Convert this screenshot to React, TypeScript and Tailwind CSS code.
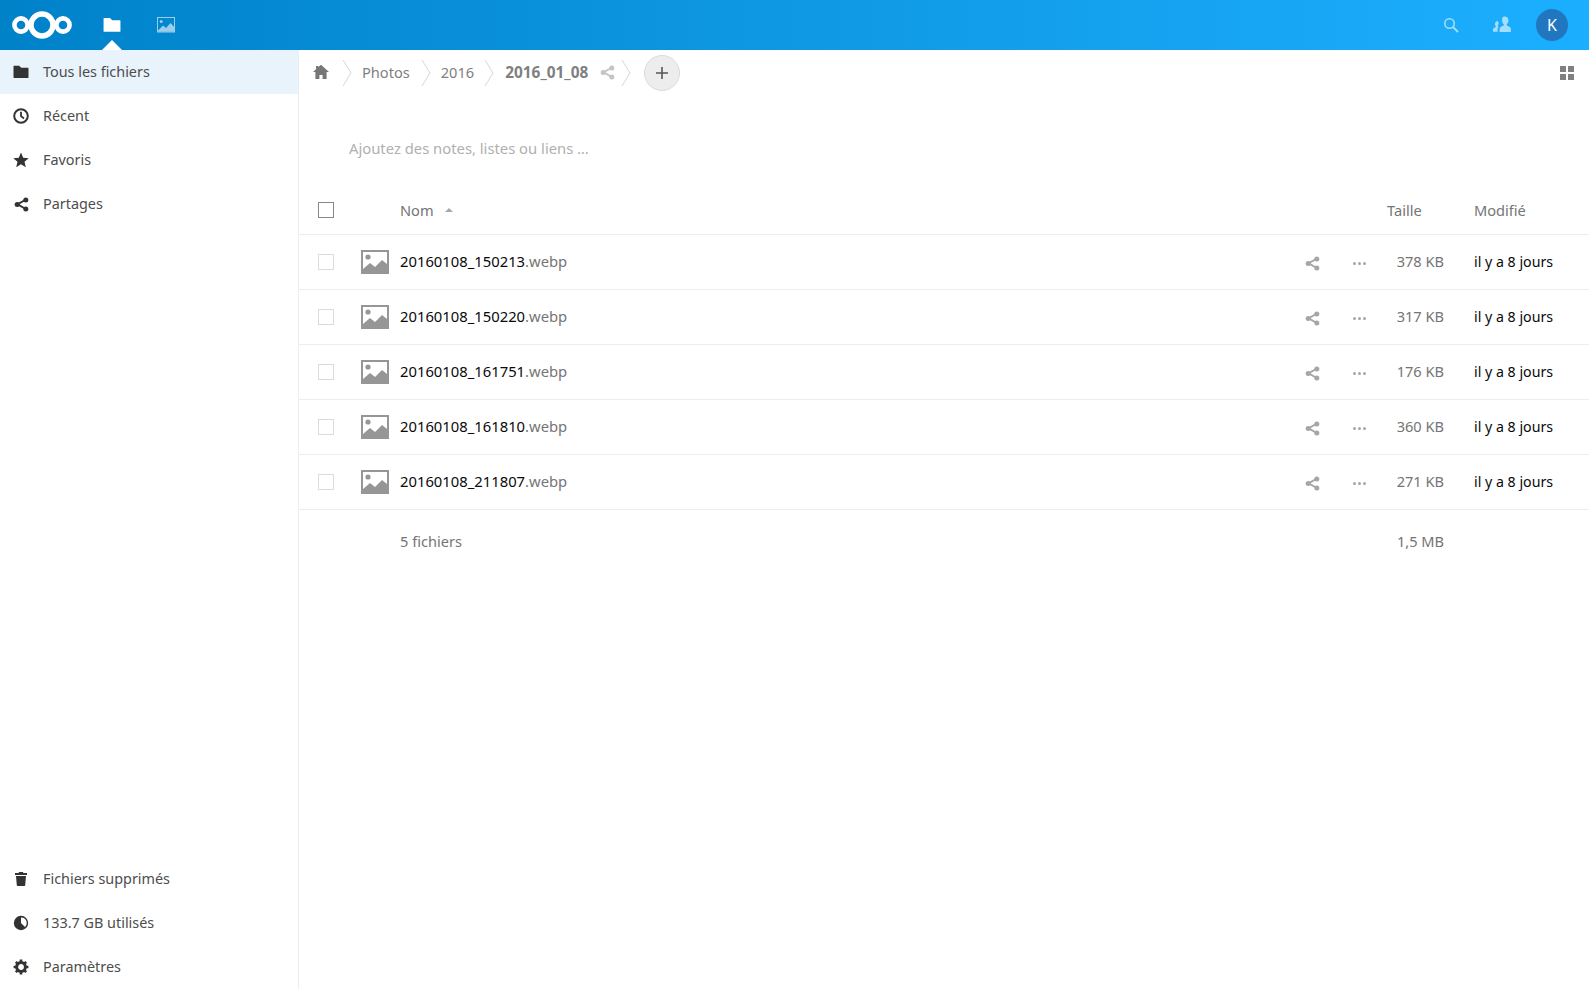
const font = "font-['Noto_Sans',sans-serif]";

function Logo() {
  return (
    <svg width="62" height="30" viewBox="0 0 62 30" fill="none" stroke="#fff">
      <circle cx="10" cy="15" r="6.6" strokeWidth="4.6" />
      <circle cx="31" cy="15" r="11" strokeWidth="5.4" />
      <circle cx="52" cy="15" r="6.6" strokeWidth="4.6" />
    </svg>
  );
}

function FolderIcon({ color, size = 16 }: { color: string; size?: number }) {
  return (
    <svg width={size} height={size} viewBox="0 0 16 16" fill={color}>
      <path d="M1 1.8h5.2l2 2H15c.3 0 .5.2.5.5v9.2c0 .3-.2.5-.5.5H1c-.3 0-.5-.2-.5-.5V2.3c0-.3.2-.5.5-.5z" />
    </svg>
  );
}

function PhotoNavIcon() {
  return (
    <svg width="18" height="16" viewBox="0 0 18 16" opacity="0.6">
      <path fill="#fff" fillRule="evenodd" d="M0 0h18v15.5H0zM1 1v13.5h16V1z" />
      <circle cx="4.2" cy="4.4" r="1.5" fill="#fff" />
      <path fill="#fff" d="M1 13.5l5-5 3 2.6 4.5-5 3.5 3.6v5H1z" />
    </svg>
  );
}

function ShareIcon({ color, size = 16 }: { color: string; size?: number }) {
  return (
    <svg width={size} height={size} viewBox="0 0 16 16" fill={color}>
      <circle cx="12.6" cy="3.2" r="2.7" />
      <circle cx="12.6" cy="12.8" r="2.7" />
      <circle cx="3.4" cy="8" r="2.7" />
      <path d="M3 7l9-5 1 1.8-9 5z M4 6.7l9 5.2-1 1.8-9-5.2z" />
    </svg>
  );
}

function ClockIcon() {
  return (
    <svg width="16" height="16" viewBox="0 0 16 16" fill="none" stroke="#333">
      <circle cx="8" cy="8" r="6.8" strokeWidth="2" />
      <path d="M8 3.8V8l3 2.6" strokeWidth="1.8" />
    </svg>
  );
}

function StarIcon() {
  return (
    <svg width="16" height="16" viewBox="0 0 16 16" fill="#333">
      <path d="M8 .6l2.2 5.1 5.5.5-4.2 3.6 1.3 5.4L8 12.3l-4.8 2.9 1.3-5.4L.3 6.2l5.5-.5z" />
    </svg>
  );
}

function TrashIcon() {
  return (
    <svg width="16" height="16" viewBox="0 0 16 16" fill="#333">
      <path d="M6.2 1h3.6l.7 1H14v2H2V2h3.5zM3 5h10l-.8 9.2c0 .5-.5.8-1 .8H4.8c-.5 0-1-.3-1-.8z" />
    </svg>
  );
}

function QuotaIcon() {
  return (
    <svg width="16" height="16" viewBox="0 0 16 16">
      <circle cx="8" cy="8" r="7.2" fill="#333" />
      <path fill="#fff" d="M8 8V2.4A5.6 5.6 0 0 1 12 12z" />
    </svg>
  );
}

function GearIcon() {
  return (
    <svg width="16" height="16" viewBox="0 0 16 16" fill="none" stroke="#333">
      <circle cx="8" cy="8" r="4.4" strokeWidth="3" />
      <path
        strokeWidth="2.6"
        d="M8 .6v2.6M8 12.8v2.6M.6 8h2.6M12.8 8h2.6M2.8 2.8l1.8 1.8M11.4 11.4l1.8 1.8M2.8 13.2l1.8-1.8M11.4 4.6l1.8-1.8"
      />
    </svg>
  );
}

function HomeIcon() {
  return (
    <svg width="16" height="16" viewBox="0 0 16 16" fill="#777">
      <path d="M8 .8L16 8h-2.4v7H9.6v-4H6.4v4H2.4V8H0L3 5.3V2h2.4v1.1z" />
    </svg>
  );
}

function Crumb() {
  return (
    <svg width="10" height="28" viewBox="0 0 10 28" fill="none" stroke="#d8d8d8" className="shrink-0">
      <path d="M1 1l8 13-8 13" />
    </svg>
  );
}

function GridIcon() {
  return (
    <svg width="14" height="14" viewBox="0 0 14 14" fill="#808080">
      <path d="M0 0h6v6H0zM8 0h6v6H8zM0 8h6v6H0zM8 8h6v6H8z" />
    </svg>
  );
}

function FileIcon() {
  return (
    <svg width="28" height="24" viewBox="0 0 28 24">
      <path fill="#969696" fillRule="evenodd" d="M0 0h28v24H0zM2 2v20h24V2z" />
      <circle cx="7" cy="7" r="2.6" fill="#969696" />
      <path fill="#969696" d="M2 19l7-6 5 4 7-7 5 4v10H2z" />
    </svg>
  );
}

function SearchIcon() {
  return (
    <svg width="16" height="16" viewBox="0 0 16 16" fill="none" stroke="#fff" opacity="0.6">
      <circle cx="6.5" cy="6.5" r="4.7" strokeWidth="1.6" />
      <path d="M10 10l5 5" strokeWidth="2" />
    </svg>
  );
}

function ContactsIcon() {
  return (
    <svg width="18" height="18" viewBox="0 0 18 18" fill="#fff" opacity="0.6">
      <path d="M11.6.4c2.4 0 3.8 1.6 3.8 3.9 0 1.7-.7 3.1-1.5 4-.4.6-.3 1.1.3 1.4 1.5.7 3.3 1.2 3.6 2.6.1.8.1 2.2.1 3.6H6.6c0-1.4 0-2.8.1-3.6.3-1.4 2.1-1.9 3.6-2.6.6-.3.7-.8.3-1.4-.8-.9-1.5-2.3-1.5-4C9.100 2 9.200.4 11.600.4z" />
      <path d="M3.6 4.800c1.300 0 2 1 2 2.400 0 1-.4 1.800-.8 2.300-.2.4-.1.7.2.9l.6.3c-.6.7-1 1.700-1 3.100v2H0c0-1.600 0-2.600.1-3 .3-.8 1.500-1.200 2.500-1.600.3-.2.4-.5.2-.8-.4-.5-.8-1.300-.8-2.200 0-1.400.4-2.400 1.600-2.400z" />
    </svg>
  );
}

function NavItem({ icon, label, active }: { icon: React.ReactNode; label: string; active?: boolean }) {
  return (
    <div className={`flex h-11 items-center text-[14.4px] text-[#4d4d4d] ${active ? "bg-[#e8f3fb]" : ""}`}>
      <div className="flex w-[42px] shrink-0 justify-center">{icon}</div>
      <span className="ml-px">{label}</span>
    </div>
  );
}

const files = [
  { name: "20160108_150213", size: "378 KB" },
  { name: "20160108_150220", size: "317 KB" },
  { name: "20160108_161751", size: "176 KB" },
  { name: "20160108_161810", size: "360 KB" },
  { name: "20160108_211807", size: "271 KB" },
];

function FileRow({ name, size }: { name: string; size: string }) {
  return (
    <div className="flex h-[55px] items-center border-b border-[#ededed]">
      <div className="ml-[19px] h-4 w-4 shrink-0 border border-[#dbdbdb]" />
      <div className="ml-[27px] shrink-0">
        <FileIcon />
      </div>
      <div className="ml-[11px] flex-1 -translate-y-px text-[14.8px] text-[#0a0a0a]">
        {name}
        <span className="text-[#757575]">.webp</span>
      </div>
      <div className="mr-[33px] translate-y-px">
        <ShareIcon color="#a6a6a6" size={15} />
      </div>
      <div className="mr-[18px] flex translate-y-px gap-[2px]">
        <span className="h-[3px] w-[3px] rounded-full bg-[#a6a6a6]" />
        <span className="h-[3px] w-[3px] rounded-full bg-[#a6a6a6]" />
        <span className="h-[3px] w-[3px] rounded-full bg-[#a6a6a6]" />
      </div>
      <div className="w-[60px] text-right text-[14.6px] text-[#757575]">{size}</div>
      <div className="w-[145px] whitespace-nowrap pl-[30px] text-[14.2px] text-[#0a0a0a]">il y a 8 jours</div>
    </div>
  );
}

export default function App() {
  return (
    <div className={`flex h-[989px] flex-col overflow-hidden bg-white text-[14.6px] ${font}`}>
      <header className="flex h-[50px] shrink-0 items-center bg-gradient-to-r from-[#0082c9] to-[#1cafff]">
        <div className="ml-[11px]">
          <Logo />
        </div>
        <div className="relative ml-[30px] flex h-full w-[18px] items-center justify-center">
          <FolderIcon color="#fff" size={20} />
          <div className="absolute bottom-0 left-1/2 h-0 w-0 -translate-x-1/2 border-x-[10px] border-b-[10px] border-x-transparent border-b-white" />
        </div>
        <div className="ml-[36px]">
          <PhotoNavIcon />
        </div>
        <div className="ml-auto">
          <SearchIcon />
        </div>
        <div className="ml-[34px]">
          <ContactsIcon />
        </div>
        <div className="ml-[25px] mr-[21px] flex h-8 w-8 items-center justify-center rounded-full bg-[#2077c0] text-[16px] text-white">
          K
        </div>
      </header>

      <div className="flex min-h-0 flex-1">
        <aside className="flex w-[299px] shrink-0 flex-col justify-between border-r border-[#ededed]">
          <nav>
            <NavItem active icon={<FolderIcon color="#333" />} label="Tous les fichiers" />
            <NavItem icon={<ClockIcon />} label="Récent" />
            <NavItem icon={<StarIcon />} label="Favoris" />
            <NavItem icon={<ShareIcon color="#333" size={15} />} label="Partages" />
          </nav>
          <nav>
            <NavItem icon={<TrashIcon />} label="Fichiers supprimés" />
            <NavItem icon={<QuotaIcon />} label="133.7 GB utilisés" />
            <NavItem icon={<GearIcon />} label="Paramètres" />
          </nav>
        </aside>

        <main className="min-w-0 flex-1">
          <div className="flex h-[46px] items-center pl-[14px] pr-[15px] text-[#7f7f7f]">
            <div className="-translate-y-px">
              <HomeIcon />
            </div>
            <div className="ml-[13px]">
              <Crumb />
            </div>
            <span className="ml-[10px]">Photos</span>
            <div className="ml-[11px]">
              <Crumb />
            </div>
            <span className="ml-[10px]">2016</span>
            <div className="ml-[10px]">
              <Crumb />
            </div>
            <span className="ml-[11px] text-[15.4px] font-bold">2016_01_08</span>
            <div className="ml-[12px] -translate-y-px">
              <ShareIcon color="#c4c4c4" size={15} />
            </div>
            <div className="ml-[6px]">
              <Crumb />
            </div>
            <div className="ml-[13px] flex h-9 w-9 items-center justify-center rounded-full border border-[#dbdbdb] bg-[#ededed]">
              <svg width="14" height="14" viewBox="0 0 14 14" stroke="#555" strokeWidth="1.6">
                <path d="M7 1v12M1 7h12" />
              </svg>
            </div>
            <div className="ml-auto">
              <GridIcon />
            </div>
          </div>

          <div className="h-[89px] pl-[50px] pt-[41px] text-[14.8px] text-[#b0b0b0]">Ajoutez des notes, listes ou liens …</div>

          <div className="flex h-[50px] items-center border-b border-[#ededed] text-[#757575]">
            <div className="ml-[19px] h-4 w-4 shrink-0 border border-[#878787]" />
            <div className="ml-[66px] flex flex-1 translate-y-px items-center">
              Nom
              <span className="ml-[11px] h-0 w-0 border-x-[4px] border-b-[4px] border-x-transparent border-b-[#a8a8a8]" />
            </div>
            <div className="w-[36px] translate-y-px">Taille</div>
            <div className="ml-[21px] w-[145px] translate-y-px pl-[30px]">Modifié</div>
          </div>

          {files.map((f) => (
            <FileRow key={f.name} name={f.name} size={f.size} />
          ))}

          <div className="flex h-[63px] items-center text-[#757575]">
            <div className="ml-[101px] flex-1">5 fichiers</div>
            <div className="w-[76px] text-right">1,5 MB</div>
            <div className="w-[145px]" />
          </div>
        </main>
      </div>
    </div>
  );
}
